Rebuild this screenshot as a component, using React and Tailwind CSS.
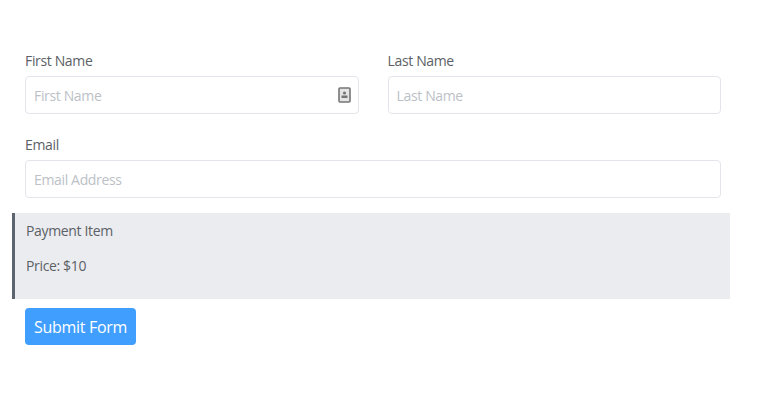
const App = () => {
    return (
        <div className="min-h-[406px] bg-white pl-[12px] pt-[52px] text-[14px] text-[#5c6166] font-['Open_Sans','Noto_Sans',sans-serif]">
            <form className="w-[718px]">
                <div className="pl-[13px] pr-[9px]">
                    <div className="grid grid-cols-2 gap-x-[29px]">
                        <div>
                            <label className="block h-[24px] leading-[18px] tracking-[-0.35px]">First Name</label>
                            <div className="relative">
                                <input
                                    className="block w-full h-[38px] px-[8px] rounded-[4px] border border-[#e3e5ea] tracking-[-0.35px] placeholder:text-[#bcc1c7] outline-none"
                                    placeholder="First Name"
                                />
                                <svg className="absolute right-[8px] top-[11px]" width="13" height="16" viewBox="0 0 13 16">
                                    <rect x="1" y="1" width="11" height="14" rx="1" fill="#e4e4e4" stroke="#757575" strokeWidth="1.6" />
                                    <circle cx="6.5" cy="6" r="1.6" fill="#757575" />
                                    <rect x="3.5" y="8.5" width="6" height="2.5" fill="#757575" />
                                </svg>
                            </div>
                        </div>

                        <div>
                            <label className="block h-[24px] leading-[18px] tracking-[-0.35px]">Last Name</label>
                            <input
                                className="block w-full h-[38px] px-[8px] rounded-[4px] border border-[#e3e5ea] tracking-[-0.35px] placeholder:text-[#bcc1c7] outline-none"
                                placeholder="Last Name"
                            />
                        </div>
                    </div>

                    <div className="mt-[22px]">
                        <label className="block h-[24px] leading-[18px] tracking-[-0.35px]">Email</label>
                        <input
                            className="block w-full h-[38px] px-[8px] rounded-[4px] border border-[#e3e5ea] tracking-[-0.35px] placeholder:text-[#bcc1c7] outline-none"
                            placeholder="Email Address"
                        />
                    </div>
                </div>

                <div className="mt-[15px] h-[86px] bg-[#ebecf0] border-l-[3px] border-[#5c6470] pl-[11px] pt-[8px] tracking-[-0.35px]">
                    <p className="leading-[19px]">Payment Item</p>
                    <p className="mt-[16px] leading-[19px]">Price: $10</p>
                </div>

                <button
                    type="button"
                    className="block ml-[13px] mt-[9px] w-[111px] h-[37px] rounded-[4px] bg-[#409eff] text-white text-[16px] tracking-[-0.3px]"
                >
                    Submit Form
                </button>
            </form>
        </div>
    );
};

export default App;
